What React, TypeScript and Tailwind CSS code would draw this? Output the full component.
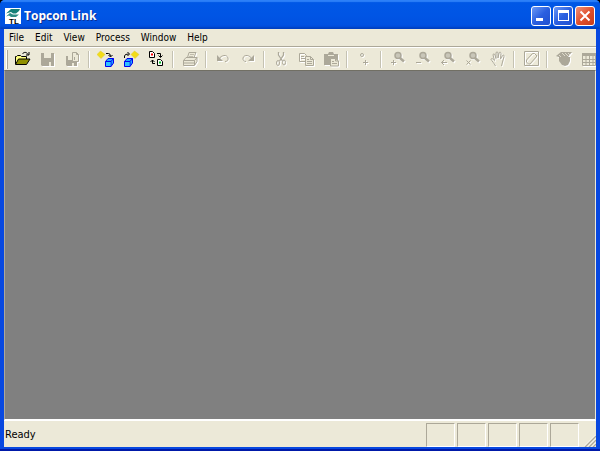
import type { ReactNode } from "react";

const G = "#aca899";

function Icon({ children, off = true }: { children: ReactNode; off?: boolean }) {
  return (
    <svg
      viewBox="0 0 18 18"
      width="18"
      height="18"
      fill="none"
      stroke={off ? G : "#000"}
      strokeWidth="1"
      className={off ? "shrink-0 drop-shadow-[1px_1px_0_#ffffff]" : "shrink-0"}
      aria-hidden="true"
    >
      {children}
    </svg>
  );
}

function Cube({ x, y }: { x: number; y: number }) {
  return (
    <g transform={`translate(${x} ${y})`} stroke="#0000f0">
      <path d="M.5 3.500 3 .5h5.500v4.500L6 8.500H.5z" fill="#20a8ff" />
      <path d="M.5 3.500H6v5M6 3.500l2.500-3" />
      <path d="M1 4h4.500v4H1z" fill="#30c0ff" stroke="none" />
    </g>
  );
}

function Star({ x, y }: { x: number; y: number }) {
  return (
    <path
      transform={`translate(${x} ${y})`}
      d="M3.500 0 5.500 1.500 8 3.500 6 5.500 4 7.500 2 5.500 0 3.500 2 1.500z"
      fill="#f2dc18"
      stroke="#dcc820"
      strokeWidth=".5"
    />
  );
}

function Lens({ mark }: { mark: string }) {
  return (
    <Icon>
      <circle cx="9" cy="5.500" r="3" fill="#c9c6b9" strokeWidth="1.500" />
      <path d="m11 8 4 3.500" strokeWidth="2.500" />
      <path d={mark} />
    </Icon>
  );
}

const groups: { name: string; icon: ReactNode; on?: boolean }[][] = [
  [
    {
      name: "Open",
      on: true,
      icon: (
        <Icon off={false}>
          <path d="M2.500 14V6.500h1l1-1h3l1 1h5V9" fill="#ffff80" />
          <path d="m2.500 14.500 3-5.500H17l-3.500 5.500z" fill="#909000" />
          <path d="M9.500 4c1-2 4-2.500 5.500.5M16 2v3h-3" />
        </Icon>
      ),
    },
    {
      name: "Save",
      icon: (
        <Icon>
          <path d="M3 3h13v13H4l-1-1z" fill={G} stroke="none" />
          <path d="M6 3h7v5H6z" fill="#ece9d8" stroke="none" />
          <path d="M11 12h2v4h-2z" fill="#ece9d8" stroke="none" />
        </Icon>
      ),
    },
    {
      name: "Save as",
      icon: (
        <Icon>
          <path d="M3 6h11v10H4l-1-1z" fill={G} stroke="none" />
          <path d="M5 6h5v4H5zM9 13h2v3H9z" fill="#ece9d8" stroke="none" />
          <path d="M9.500 2.500h4l2 2v7h-6z" fill="#ece9d8" />
          <path d="M13.500 2.500v2h2M11.500 7v3" />
        </Icon>
      ),
    },
  ],
  [
    {
      name: "Import",
      on: true,
      icon: (
        <Icon off={false}>
          <Star x={0} y={1} />
          <path d="M9 3.500h2.500q2 0 2 3M11.500 5l2 2 2-2" />
          <Cube x={8} y={8} />
        </Icon>
      ),
    },
    {
      name: "Export",
      on: true,
      icon: (
        <Icon off={false}>
          <path d="M2.500 8V6q0-2 4-2M5.500 2l2 2-2 2" />
          <Star x={9} y={1} />
          <Cube x={2} y={8} />
        </Icon>
      ),
    },
    {
      name: "Convert files",
      on: true,
      icon: (
        <Icon off={false}>
          <path d="M2.500 1.500h3l2 2v4h-5zM10.500 9.500h3l2 2v4h-5z" fill="#fff" />
          <path d="M4 4.500h2" stroke="#f00" strokeWidth="2" />
          <path d="M12 12.500h2" stroke="#00c020" strokeWidth="2" />
          <path d="M10 3.500h3.500V7M11.500 5.500l2 2 2-2M8 13.500H5.500V10M3.500 12l2-2 2 2" />
        </Icon>
      ),
    },
  ],
  [
    {
      name: "Print",
      icon: (
        <Icon>
          <path d="m6.500 7.500 1.500-5h7l-2 5" fill="#ece9d8" />
          <path d="M9 4.500h4M8 6.500h4" strokeWidth=".7" />
          <path d="M2.500 10.500 5 7.500h11v4l-2.500 4h-11z" fill="#ece9d8" />
          <path d="M2.500 10.500h11v4.500M3 13h10.500M13.500 10.500l2.500-3" />
        </Icon>
      ),
    },
  ],
  [
    {
      name: "Undo",
      icon: (
        <Icon>
          <path d="M5 9c2-4 8-5 9-1 .5 2-1 3.500-3 3.500" />
          <path d="M3 5v6h6z" fill={G} stroke="none" />
        </Icon>
      ),
    },
    {
      name: "Redo",
      icon: (
        <Icon>
          <path d="M13 9C11 5 5 4 4 8c-.5 2 1 3.500 3 3.500" />
          <path d="M15 5v6H9z" fill={G} stroke="none" />
        </Icon>
      ),
    },
  ],
  [
    {
      name: "Cut",
      icon: (
        <Icon>
          <path d="M6.500 2v3l4 6M11.500 2v3l-4 6" strokeWidth="1.300" />
          <ellipse cx="6" cy="13" rx="1.500" ry="2.500" />
          <ellipse cx="12" cy="12.500" rx="1.500" ry="2.500" />
        </Icon>
      ),
    },
    {
      name: "Copy",
      icon: (
        <Icon>
          <path d="M2.500 3.500h5l2 2v6h-7zM4 6.500h3M4 8.500h4" />
          <path d="M8.500 6.500h5l3 3v6h-8z" fill="#ece9d8" />
          <path d="M13.500 6.500v3h3M10 9.500h2M10 11.500h5M10 13.500h5" />
        </Icon>
      ),
    },
    {
      name: "Paste",
      icon: (
        <Icon>
          <path d="M2 4h4l1-2h4l1 2h4v11H2z" fill={G} stroke="none" />
          <path d="M6 5.500h6" stroke="#ece9d8" />
          <path d="M8.500 8.500h5l3 2.500v5h-8z" fill="#ece9d8" />
          <path d="M13.500 8.500V11h3M10 11.500h2M10 13.500h5" />
        </Icon>
      ),
    },
  ],
  [
    {
      name: "Add point",
      icon: (
        <Icon>
          <circle cx="7" cy="5" r="1.500" />
          <path d="M8 12.500h5M10.500 10v5" />
        </Icon>
      ),
    },
  ],
  [
    { name: "Zoom in", icon: <Lens mark="M2 12.500h5M4.500 10v5" /> },
    { name: "Zoom out", icon: <Lens mark="M2 12.500h5" /> },
    { name: "Zoom previous", icon: <Lens mark="M2.500 12.500H8M5 10l-2.500 2.500L5 15" /> },
    { name: "Zoom all", icon: <Lens mark="m2.500 10.500 4 4m0-4-4 4" /> },
    {
      name: "Pan",
      icon: (
        <Icon>
          <path d="M6.500 16C5 13 3 11 2 9.500c0-1.500 2-1 3.500 1L4 5c0-1.500 1.500-1.500 2 0l1 3.500V3c0-1.500 2-1.500 2 0v5l1-5c.5-1.500 2-1 2 .5L11.500 9l2-3.500c1-1 2 0 1.500 1L13.500 12l-1 4" />
        </Icon>
      ),
    },
  ],
  [
    {
      name: "Page layout",
      icon: (
        <Icon>
          <path d="M2.500 1.500h14v14h-14z" />
          <path d="m4.500 10 6-6.500h2L15 6l-7 8H6.500l-2-2z" />
        </Icon>
      ),
    },
  ],
  [
    {
      name: "Globe",
      icon: (
        <Icon>
          <path d="M4 7h11v4l-2 4-3 1-3-1-3-4z" fill={G} stroke="none" />
          <path d="m1 6 5-4h11l-4 5-4 2z" fill={G} stroke="none" />
          <path d="m4 5 2 2m1-4 3 3m0-3 3 3m0-3 2 2" stroke="#ece9d8" strokeWidth=".8" />
        </Icon>
      ),
    },
    {
      name: "Table",
      icon: (
        <Icon>
          <path d="M2.500 3.500h13v12h-13z" fill="#ece9d8" />
          <path d="M2 3h14v3H2z" fill={G} stroke="none" />
          <path d="M2 9.500h14M2 12.500h14M6 6v10M9.500 6v10M13 6v10" />
        </Icon>
      ),
    },
  ],
];

const wideAfter = [0, 1, 5];

function Separator({ wide }: { wide: boolean }) {
  return (
    <div className={`${wide ? "w-[9px]" : "w-2"} flex shrink-0 justify-center`}>
      <div className="h-[17px] w-[2px] border-r border-white bg-[#c5c2b2]" />
    </div>
  );
}

const caption =
  "flex size-[20px] items-center justify-center rounded-[3px] border border-white bg-linear-to-br";

export default function App() {
  return (
    <div className="flex h-screen flex-col overflow-hidden bg-black font-['DejaVu_Sans_Condensed','DejaVu_Sans',sans-serif] text-[10px] text-black">
      <div className="flex min-h-0 flex-1 flex-col overflow-hidden rounded-t-[5px] border-b-2 border-[#0019a8] bg-[#0848e0]">
        <header className="flex h-[29px] shrink-0 items-center bg-linear-to-b from-[#0058e6] via-[#0055e5] to-[#0050e0] from-0% via-50% to-100% pl-[5px] pr-[5px] pt-[2px] shadow-[inset_0_2px_1px_#2c80f8,inset_0_-2px_2px_#0040c0]">
          <svg viewBox="0 0 16 16" width="16" height="16" className="mr-[3px] shrink-0" aria-hidden="true">
            <path d="M0 0h16v16H0z" fill="#fff" />
            <path d="M1 5.500 6 1h9l-1 2-3 2.500H8L6 4z" fill="#168078" />
            <path d="M1 8.500 5 5l3 1.500h6L11 9H6L4 7.500z" fill="#2c8c84" />
            <text x="4" y="15.500" fontFamily="Liberation Sans, sans-serif" fontWeight="700" fontSize="8" fill="#000">
              TL
            </text>
          </svg>
          <h1 className="flex-1 font-['Open_Sans',sans-serif] text-[12px] font-bold leading-4 text-white [text-shadow:1px_1px_0_#0b2f93]">
            Topcon Link
          </h1>
          <div className="flex gap-[2px]">
            <button aria-label="Minimize" className={`${caption} from-[#6c98f5] via-[#2a5fe0] to-[#2050d0]`}>
              <span className="mr-1 mt-2 h-[3px] w-[7px] bg-white" />
            </button>
            <button aria-label="Maximize" className={`${caption} from-[#6c98f5] via-[#2a5fe0] to-[#2050d0]`}>
              <span className="size-[11px] border border-t-[3px] border-white" />
            </button>
            <button aria-label="Close" className={`${caption} from-[#f09078] via-[#e0502c] to-[#c83c18]`}>
              <svg viewBox="0 0 12 12" width="12" height="12" aria-hidden="true">
                <path d="m1.500 1.500 9 9m0-9-9 9" stroke="#fff" strokeWidth="2" />
              </svg>
            </button>
          </div>
        </header>
        <div className="flex min-h-0 flex-1 flex-col border-b-2 border-l-4 border-r-4 border-[#0848e0] bg-[#ece9d8]">
          <nav className="flex h-[18px] shrink-0 items-center gap-[11px] border-b border-[#aca899] pl-[5px]">
            {["File", "Edit", "View", "Process", "Window", "Help"].map((m) => (
              <button key={m} className="leading-4">
                {m}
              </button>
            ))}
          </nav>
          <div
            role="toolbar"
            className="flex h-[23px] shrink-0 items-center overflow-hidden border-t border-white pl-[2px]"
          >
            <div className="mr-px h-[19px] w-[2px] shrink-0 border-r border-[#aca899] bg-white" />
            {groups.map((g, i) => (
              <div key={i} className="flex shrink-0 items-center">
                {g.map((b) => (
                  <button
                    key={b.name}
                    aria-label={b.name}
                    disabled={!b.on}
                    className="flex w-[25px] shrink-0 justify-center"
                  >
                    {b.icon}
                  </button>
                ))}
                {i < groups.length - 1 && <Separator wide={wideAfter.includes(i)} />}
              </div>
            ))}
          </div>
          <main className="min-h-0 flex-1 border border-b-white border-l-[#aca899] border-r-[#ece9d8] border-t-[#716f64] bg-[#808080]" />
          <footer className="flex h-[27px] shrink-0 items-stretch border-t border-white pt-[2px]">
            <p className="flex flex-1 items-center pl-px text-[11px]">Ready</p>
            <div className="flex gap-[2px] pr-[17px]">
              {[0, 1, 2, 3, 4].map((i) => (
                <div key={i} className="w-[29px] border border-b-white border-l-[#aca899] border-r-white border-t-[#aca899]" />
              ))}
            </div>
            <svg viewBox="0 0 12 12" width="12" height="12" className="-ml-3 self-end" aria-hidden="true">
              <path d="M1 12 12 1M5 12l7-7M9 12l3-3" stroke="#aca899" strokeWidth="1.500" />
              <path d="M0 11.500 11.500 0M4 11.500l8-8M8 11.500l4-4" stroke="#fff" strokeWidth=".8" />
            </svg>
          </footer>
        </div>
      </div>
    </div>
  );
}
